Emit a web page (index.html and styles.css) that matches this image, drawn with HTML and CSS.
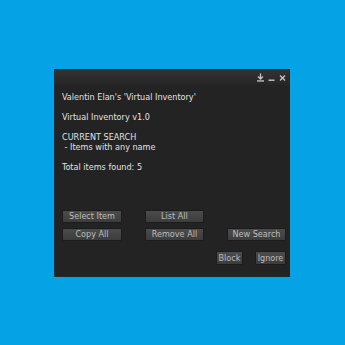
FILE: index.html
```html
<!DOCTYPE html>
<html>
<head>
<meta charset="utf-8">
<link rel="stylesheet" href="styles.css">
</head>
<body>
<div class="window">
  <div class="titlebar">
    <svg class="ico" width="9" height="9" viewBox="0 0 9 9"><path d="M4.5 0.5 V5.5 M2 3.5 L4.5 6 L7 3.5" stroke="#c8c8c8" stroke-width="1.3" fill="none"/><rect x="1" y="7.3" width="7" height="1.3" fill="#c8c8c8"/></svg>
    <svg class="ico" width="9" height="9" viewBox="0 0 9 9"><rect x="1.5" y="6.5" width="6" height="1.4" fill="#c8c8c8"/></svg>
    <svg class="ico" width="9" height="9" viewBox="0 0 9 9"><path d="M2 2.5 L7 7.5 M7 2.5 L2 7.5" stroke="#c8c8c8" stroke-width="1.3"/></svg>
  </div>
  <div class="content">
    <div class="text">
      <div>Valentin Elan's 'Virtual Inventory'</div>
      <div class="blank"></div>
      <div>Virtual Inventory v1.0</div>
      <div class="blank"></div>
      <div>CURRENT SEARCH</div>
      <div>&nbsp;- Items with any name</div>
      <div class="blank"></div>
      <div>Total items found: 5</div>
    </div>
    <div class="grid">
      <button class="btn">Select Item</button>
      <button class="btn">List All</button>
      <span></span>
      <button class="btn">Copy All</button>
      <button class="btn">Remove All</button>
      <button class="btn">New Search</button>
    </div>
    <div class="row3">
      <button class="btn small block">Block</button>
      <button class="btn small ignore">Ignore</button>
    </div>
  </div>
</div>
</body>
</html>
```
FILE: styles.css
```css
html, body {
  margin: 0;
  padding: 0;
}
body {
  width: 345px;
  height: 345px;
  background: #05a3e6;
  padding: 70px 0 0 55px;
  box-sizing: border-box;
  font-family: "DejaVu Sans Condensed", "DejaVu Sans", sans-serif;
}
.window {
  width: 234px;
  height: 206px;
  background: #232323;
  box-shadow: 0 0 0 1px #1a2a33;
  display: flex;
  flex-direction: column;
}
.titlebar {
  height: 15px;
  background: linear-gradient(#333333, #262626);
  display: flex;
  justify-content: flex-end;
  align-items: center;
  gap: 2px;
  padding-right: 2px;
}
.ico {
  display: block;
}
.content {
  flex: 1;
  padding: 7px 3px 0 7px;
}
.text {
  color: #e2e2e2;
  font-size: 9px;
  line-height: 10px;
  font-stretch: condensed;
}
.blank {
  height: 10px;
}
.grid {
  margin-top: 38px;
  display: grid;
  grid-template-columns: 60px 59px 59px;
  column-gap: 23px;
  row-gap: 5px;
}
.btn {
  height: 13px;
  padding: 0;
  margin: 0;
  border: 1px solid #1c1c1c;
  border-radius: 1px;
  background: linear-gradient(#4c4c4c, #3c3c3c);
  color: #bdbdbd;
  font-family: "DejaVu Sans Condensed", "DejaVu Sans", sans-serif;
  font-stretch: condensed;
  font-size: 9px;
  line-height: 11px;
  text-align: center;
  box-sizing: border-box;
}
.row3 {
  margin-top: 10px;
  display: flex;
  justify-content: flex-end;
  gap: 12px;
}
.small {
  height: 14px;
  line-height: 12px;
}
.block {
  width: 27px;
}
.ignore {
  width: 31px;
}
```
